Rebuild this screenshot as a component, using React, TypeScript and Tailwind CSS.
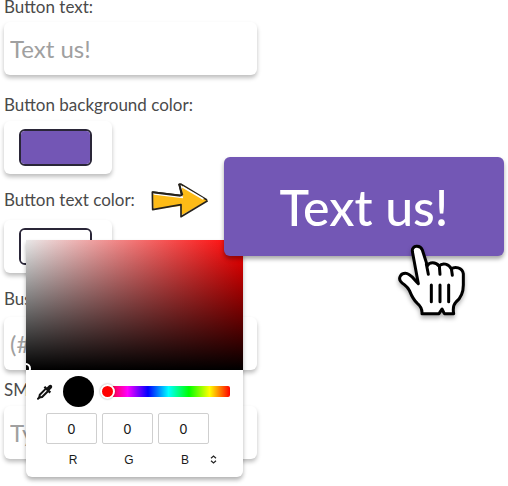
import { useState } from "react";

const card =
  "bg-white rounded-md shadow-[0_3px_4px_rgba(0,0,0,0.25)]";

const textBox =
  "block w-full h-[53px] px-[6px] text-2xl text-[#a0a0a0] placeholder:text-[#a0a0a0] outline-none";

const labelText = "block text-[17px] text-[#4a4a4a] whitespace-nowrap";

const channels = ["R", "G", "B"];

function Swatch({ id, color }: { id: string; color: string }) {
  return (
    <div className={`${card} w-[108px] h-[53px] pl-[15px] pt-2`}>
      <input
        id={id}
        type="color"
        defaultValue={color}
        className="block appearance-none w-[73px] h-[37px] p-0 bg-transparent rounded-md overflow-hidden border-2 border-[#2a2638] [&::-webkit-color-swatch-wrapper]:p-0 [&::-webkit-color-swatch]:border-0"
      />
    </div>
  );
}

function Eyedropper() {
  return (
    <svg width="16" height="16" viewBox="0 0 16 16">
      <path
        d="M8.6 4.9 2.8 10.7 2.2 13.6 5.1 13 10.9 7.2"
        fill="none"
        stroke="#111"
        strokeWidth="2"
        strokeLinejoin="round"
      />
      <path d="M2.4 13.4 1 14.8" stroke="#111" strokeWidth="2" strokeLinecap="round" />
      <path
        d="M6.6 3.5 8.2 1.9 9.8 3.5 11.8 1.5C13.9-.4 16.4 2.1 14.6 4.2L12.6 6.2 14.1 7.8 12.5 9.4Z"
        fill="#111"
      />
    </svg>
  );
}

function ColorPicker() {
  const [hue, setHue] = useState(0);

  return (
    <div className="absolute left-[26px] top-60 w-[217px] h-[237px] bg-white rounded-b-md shadow-[0_3px_4px_rgba(0,0,0,0.3)] font-['Liberation_Sans',sans-serif]">
      {/* Saturation / value area */}
      <div className="relative h-[130px] overflow-hidden bg-[linear-gradient(to_top,#000,transparent),linear-gradient(to_right,#e8e8e8,#f00)]">
        <span className="absolute -left-[6px] -bottom-[4px] size-[11px] rounded-full border-2 border-white"></span>
      </div>

      <div className="flex items-center h-[43px] pl-[11px] pr-[13px]">
        <button type="button" aria-label="Pick a color from the screen">
          <Eyedropper />
        </button>
        <span className="ml-[10px] size-[31px] rounded-full bg-black"></span>
        <input
          type="range"
          aria-label="Hue"
          min={0}
          max={360}
          value={hue}
          onChange={(e) => setHue(Number(e.target.value))}
          className="appearance-none ml-[6px] flex-1 min-w-0 h-[11px] rounded-xs bg-[linear-gradient(to_right,transparent_7px,#f00_7px,#f0f,#00f,#0ff,#0f0,#ff0,#f00)] [&::-webkit-slider-thumb]:appearance-none [&::-webkit-slider-thumb]:size-[15px] [&::-webkit-slider-thumb]:rounded-full [&::-webkit-slider-thumb]:bg-[#f00] [&::-webkit-slider-thumb]:border-2 [&::-webkit-slider-thumb]:border-white [&::-webkit-slider-thumb]:shadow-[0_0_2px_rgba(0,0,0,0.4)]"
        />
      </div>

      <div className="flex pl-5 gap-[5px]">
        {channels.map((name) => (
          <div key={name} className="w-[51px]">
            <input
              id={`channel-${name}`}
              defaultValue="0"
              className="block w-full h-[31px] border border-[#cfcfcf] text-center text-sm text-[#1a1a1a] rounded-xs"
            />
            <label
              htmlFor={`channel-${name}`}
              className="block mt-2 pl-[3px] text-center text-xs leading-4 text-[#1a1a1a]"
            >
              {name}
            </label>
          </div>
        ))}
        <button type="button" aria-label="Switch color format" className="self-end mb-1 -ml-1">
          <svg width="7" height="9" viewBox="0 0 7 9" fill="none" stroke="#222" strokeWidth="1.2">
            <path d="M1 3.2 3.5 1 6 3.2M1 5.8 3.5 8 6 5.8" />
          </svg>
        </button>
      </div>
    </div>
  );
}

function Arrow() {
  return (
    <svg width="58" height="37" viewBox="30 36 174 111">
      <path d="M39 73 127 80 126 47 202 92 124 136 123 108 40 116Z" fill="#fdbb17" />
      <path
        d="M201 90 122 42 118 43 125 77 37 66 38 119 123 104 123 140 203 92"
        fill="none"
        stroke="#26221b"
        strokeWidth="5"
        strokeLinejoin="round"
      />
      <path d="M43 72 129 82M127 50 190 87" stroke="#fff" strokeWidth="5" fill="none" />
      <path d="M117 41 127 75M37 67 122 77" stroke="#26221b" strokeWidth="6" fill="none" />
    </svg>
  );
}

function Hand() {
  return (
    <svg
      width="69"
      height="74"
      viewBox="51 39 207 222"
      className="absolute left-[173px] top-[87px] overflow-visible drop-shadow-[0_3px_2px_rgba(0,0,0,0.3)]"
    >
      <path
        d="M115 158 97 61C95 42 121 41 127 57L142 104C148 93 167 92 177 105C187 94 207 98 214 114C224 105 247 109 250 128V162C250 189 239 204 228 213C219 222 218 231 221 248H193L186 234 177 248H126C127 232 122 225 112 217C99 206 94 193 88 178C82 165 70 161 62 151C54 140 63 127 76 127C91 127 99 142 115 158Z"
        fill="#fff"
        stroke="#000"
        strokeWidth="9"
        strokeLinejoin="round"
      />
      <path
        d="M139 99 145 130M178 104 180 130M214 112 217 133M154 162V212M180 162V212M206 162V212"
        fill="none"
        stroke="#000"
        strokeWidth="9"
        strokeLinecap="round"
      />
    </svg>
  );
}

export default function App() {
  return (
    <main className="relative bg-white font-[Lato,sans-serif] overflow-hidden pb-7">
      <form className="relative w-[257px] pl-1">
        <div>
          <label htmlFor="button-text" className={`${labelText} h-4 leading-[14px]`}>Button text:</label>
          <input id="button-text" placeholder="Text us!" className={`${card} ${textBox} mt-[6px]`} />
        </div>

        <div className="mt-5">
          <label htmlFor="background-color" className={`${labelText} leading-5 mb-[6px]`}>
            Button background color:
          </label>
          <Swatch id="background-color" color="#7356b5" />
        </div>

        <div className="mt-4">
          <label htmlFor="text-color" className={`${labelText} leading-5 mb-[10px]`}>Button text color:</label>
          <Swatch id="text-color" color="#ffffff" />
        </div>

        <div className="mt-4">
          <label htmlFor="business" className={`${labelText} leading-5`}>Business</label>
          <input id="business" placeholder="(###)" className={`${card} ${textBox} mt-[8px]`} />
        </div>

        <div className="mt-[10px]">
          <label htmlFor="sms" className={`${labelText} leading-5`}>SMS</label>
          <input id="sms" placeholder="Type" className={`${card} ${textBox} mt-[6px]`} />
        </div>

        <ColorPicker />
      </form>

      {/* Button preview, laid over the picker corner */}
      <div className="absolute left-[150px] right-1 top-[157px] flex items-start gap-4">
        <div className="mt-[25px]">
          <Arrow />
        </div>
        <div className="relative flex-1">
          <button
            type="button"
            className="block w-full h-[99px] rounded-md bg-[#7357b5] text-white text-[50px] leading-[60px] font-medium shadow-[0_3px_4px_rgba(0,0,0,0.35)]"
          >
            Text us!
          </button>
          <Hand />
        </div>
      </div>
    </main>
  );
}
